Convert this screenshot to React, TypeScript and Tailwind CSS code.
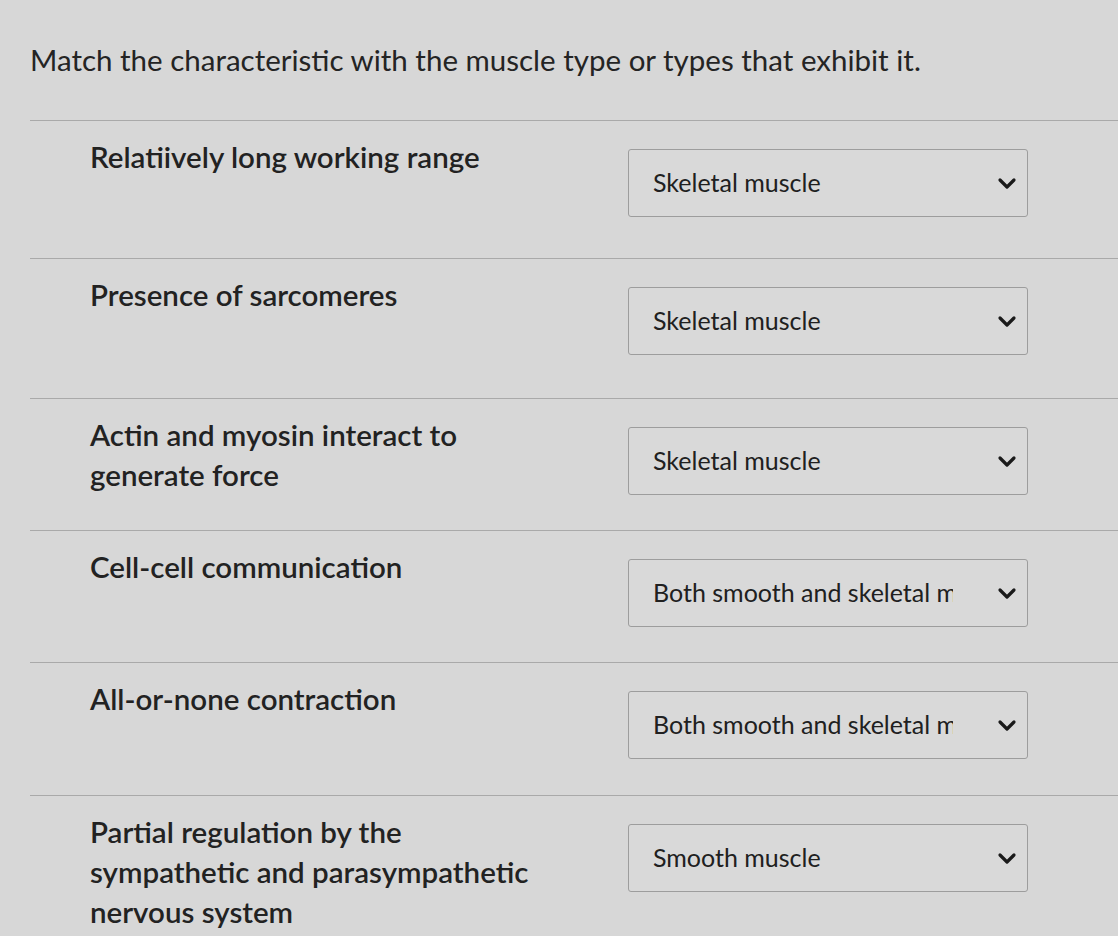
import React from "react";

const rows: { label: string[]; value: string; h: number }[] = [
  { label: ["Relatiively long working range"], value: "Skeletal muscle", h: 138 },
  { label: ["Presence of sarcomeres"], value: "Skeletal muscle", h: 140 },
  { label: ["Actin and myosin interact to", "generate force"], value: "Skeletal muscle", h: 132 },
  { label: ["Cell-cell communication"], value: "Both smooth and skeletal muscle", h: 132 },
  { label: ["All-or-none contraction"], value: "Both smooth and skeletal muscle", h: 133 },
  {
    label: ["Partial regulation by the", "sympathetic and parasympathetic", "nervous system"],
    value: "Smooth muscle",
    h: 160,
  },
];

function Chevron() {
  return (
    <svg width="20" height="13" viewBox="0 0 20 13" fill="none">
      <path d="M3 3 L10 10 L17 3" stroke="#1a1a1a" strokeWidth="3.2" strokeLinecap="round" strokeLinejoin="round" />
    </svg>
  );
}

export default function App() {
  return (
    <div
      className="w-[1118px] h-[936px] overflow-hidden bg-[#d7d7d7] text-[#242424] pl-[30px]"
      style={{ fontFamily: "Lato, 'Open Sans', sans-serif" }}
    >
      <div className="pt-[41px] text-[29.5px] leading-[38px] whitespace-nowrap">
        Match the characteristic with the muscle type or types that exhibit it.
      </div>
      <div className="mt-[41px]">
        {rows.map((r, i) => (
          <div
            key={i}
            className="border-t border-[#a9a9a9] flex items-start pt-[16px]"
            style={{ height: r.h }}
          >
            <div className="ml-[60px] w-[538px] text-[29.5px] font-semibold leading-[40px] text-[#222] whitespace-nowrap">
              {r.label.map((l, j) => (
                <div key={j}>{l}</div>
              ))}
            </div>
            <div className="mt-[12px] w-[400px] h-[68px] border border-[#9d9d9d] rounded-[3px] bg-[#d9d9d9] flex items-center pl-[24px] pr-[10px] justify-between">
              <span className="block w-[300px] overflow-hidden whitespace-nowrap text-[25px] text-[#202020]">
                {r.value}
              </span>
              <Chevron />
            </div>
          </div>
        ))}
      </div>
    </div>
  );
}
